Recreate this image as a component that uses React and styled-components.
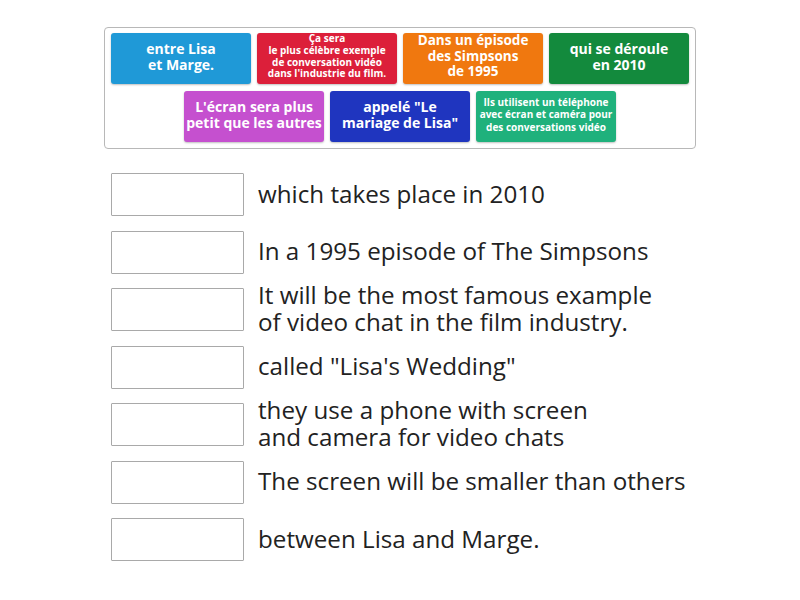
import React from "react";
import styled, { createGlobalStyle } from "styled-components";

const GlobalStyle = createGlobalStyle`
  html, body {
    margin: 0;
    padding: 0;
    background: #ffffff;
    font-family: "Open Sans", "Liberation Sans", sans-serif;
  }
`;

const Page = styled.div`
  width: 800px;
  height: 600px;
  padding-top: 27px;
  box-sizing: border-box;
`;

const Tray = styled.div`
  width: 592px;
  margin-left: 104px;
  box-sizing: border-box;
  border: 1px solid #b8b8b8;
  border-radius: 4px;
  padding: 5px 5px 6px;
  display: flex;
  flex-wrap: wrap;
  justify-content: center;
  gap: 7px 6px;
`;

const Card = styled.div`
  width: 140px;
  height: 51px;
  box-sizing: border-box;
  border-radius: 3px;
  background: ${(p) => p.$bg};
  color: #ffffff;
  font-weight: 700;
  font-size: ${(p) => p.$size}px;
  line-height: ${(p) => p.$lh}px;
  text-align: center;
  display: flex;
  align-items: center;
  justify-content: center;
  padding: 0 2px 4px;
  box-shadow: 0 1px 2px rgba(0, 0, 0, 0.25);
`;

const Answers = styled.div`
  margin-top: 24px;
  margin-left: 111px;
  display: grid;
  grid-auto-rows: 43px;
  row-gap: 14.5px;
`;

const Row = styled.div`
  display: flex;
  align-items: center;
  gap: 14px;
`;

const Slot = styled.div`
  width: 133px;
  height: 43px;
  box-sizing: border-box;
  border: 1px solid #a9a9a9;
  border-radius: 1px;
  background: #fff;
  flex-shrink: 0;
`;

const Prompt = styled.div`
  font-size: 24.2px;
  line-height: 27px;
  color: #222222;
  white-space: nowrap;
  padding-bottom: 3px;
`;

const cards = [
  { bg: "#1f99d7", size: 14, lh: 16, text: ["entre Lisa", "et Marge."] },
  {
    bg: "#dc1f3a",
    size: 10,
    lh: 11.7,
    text: ["Ça sera", "le plus célèbre exemple", "de conversation vidéo", "dans l'industrie du film."],
  },
  { bg: "#f0780f", size: 13.5, lh: 15.5, text: ["Dans un épisode", "des Simpsons", "de 1995"] },
  { bg: "#138a3d", size: 14, lh: 16, text: ["qui se déroule", "en 2010"] },
  { bg: "#c550cf", size: 14, lh: 16, text: ["L'écran sera plus", "petit que les autres"] },
  { bg: "#1f35bf", size: 14, lh: 16, text: ["appelé \"Le", "mariage de Lisa\""] },
  {
    bg: "#1fb17c",
    size: 10,
    lh: 12.5,
    text: ["Ils utilisent un téléphone", "avec écran et caméra pour", "des conversations vidéo"],
  },
];

const prompts = [
  ["which takes place in 2010"],
  ["In a 1995 episode of The Simpsons"],
  ["It will be the most famous example", "of video chat in the film industry."],
  ["called \"Lisa's Wedding\""],
  ["they use a phone with screen", "and camera for video chats"],
  ["The screen will be smaller than others"],
  ["between Lisa and Marge."],
];

const Lines = ({ lines }) =>
  lines.map((l, i) => (
    <React.Fragment key={i}>
      {i > 0 && <br />}
      {l}
    </React.Fragment>
  ));

export default function App() {
  return (
    <Page>
      <GlobalStyle />
      <Tray>
        {cards.map((c, i) => (
          <Card key={i} $bg={c.bg} $size={c.size} $lh={c.lh}>
            <span>
              <Lines lines={c.text} />
            </span>
          </Card>
        ))}
      </Tray>
      <Answers>
        {prompts.map((p, i) => (
          <Row key={i}>
            <Slot />
            <Prompt>
              <Lines lines={p} />
            </Prompt>
          </Row>
        ))}
      </Answers>
    </Page>
  );
}
